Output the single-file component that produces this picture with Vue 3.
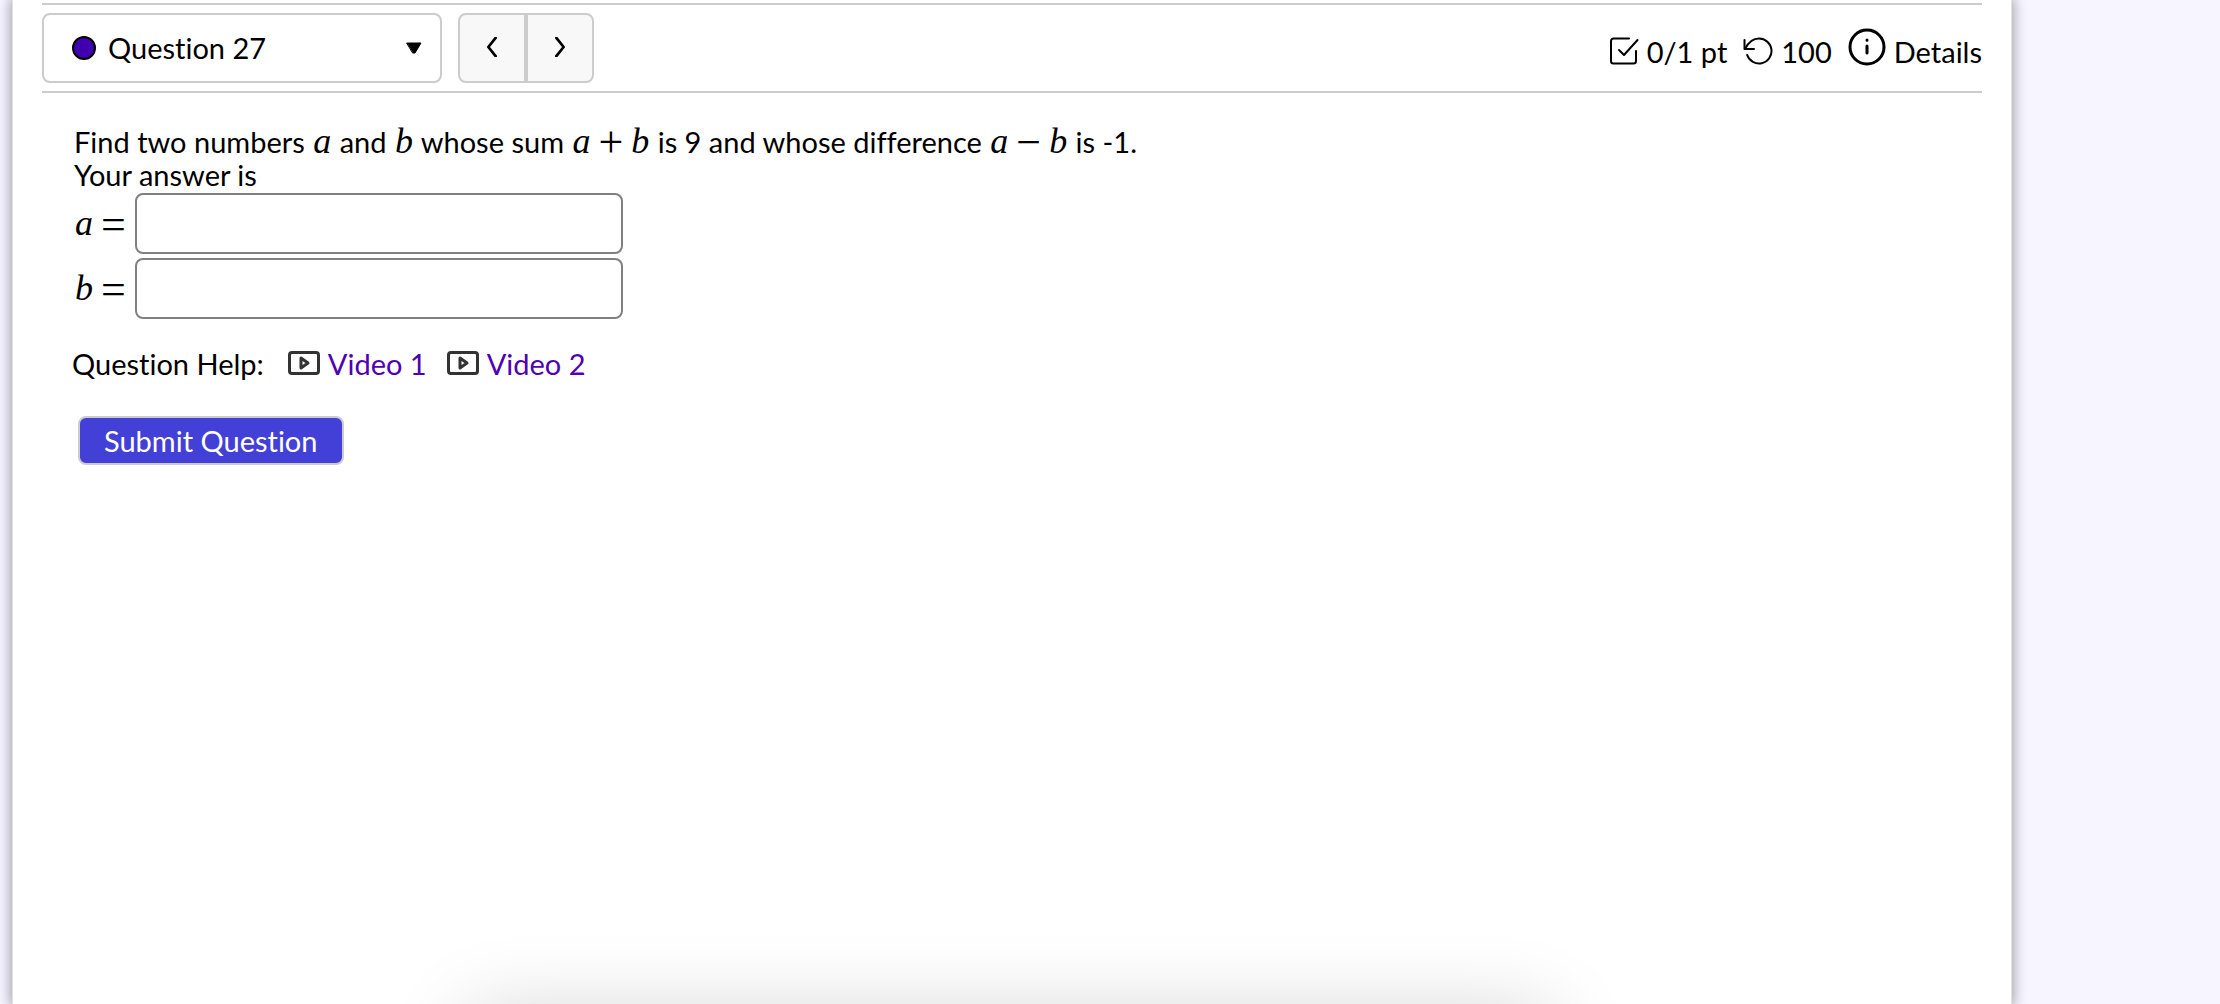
<template>
  <div class="sheet">
    <header class="bar">
      <div class="picker">
        <span class="dot"></span>
        <select v-model="current" class="picker-select" aria-label="Question">
          <option v-for="n in questions" :key="n" :value="n">Question {{ n }}</option>
        </select>
        <svg class="caret" viewBox="0 0 16 12" aria-hidden="true"><path d="M1 1h14L9 11H7z" /></svg>
      </div>
      <div class="pager">
        <button type="button" aria-label="Previous question" @click="go(-1)">
          <svg viewBox="0 0 12 22"><path d="M10 1 2 11l8 10" /></svg>
        </button>
        <button type="button" aria-label="Next question" @click="go(1)">
          <svg viewBox="0 0 12 22"><path d="m2 1 8 10-8 10" /></svg>
        </button>
      </div>

      <div class="status">
        <span class="stat">
          <svg class="icon" viewBox="0 0 30 28" aria-hidden="true">
            <path d="M20 1.500H4.500a2.500 2.500 0 0 0-2.500 2.500v20a2.500 2.500 0 0 0 2.500 2.500h20a2.500 2.500 0 0 0 2.500-2.500V14" />
            <path d="m10 13 5 5L28.500 3" />
          </svg>
          0/1 pt
        </span>
        <span class="stat">
          <svg class="icon" viewBox="0 0 30 28" aria-hidden="true">
            <path d="M1.500 3v9h9.500" />
            <path d="M2 12C5 6 9 1.500 16 1.500a12.500 12.500 0 1 1-11.800 16.500" />
          </svg>
          100
        </span>
        <button type="button" class="stat details">
          <svg class="info" viewBox="0 0 38 38" aria-hidden="true">
            <circle cx="19" cy="19" r="17" />
            <path d="M19 18v7M19 12v.200" />
          </svg>
          Details
        </button>
      </div>
    </header>

    <main class="question">
      <p class="prompt">
        Find two numbers <i>a</i> and <i>b</i> whose sum
        <span class="math"><i>a</i><b>+</b><i>b</i></span> is 9 and whose difference
        <span class="math"><i>a</i><b>−</b><i>b</i></span> is -1.
      </p>
      <p class="prompt">Your answer is</p>
      <div v-for="name in ['a', 'b']" :key="name" class="answer">
        <label :for="'answer-' + name" class="math"><i>{{ name }}</i><b>=</b></label>
        <input :id="'answer-' + name" v-model="answers[name]" type="text" autocomplete="off" />
      </div>
    </main>

    <div class="help">
      <span class="help-title">Question Help:</span>
      <a v-for="n in 2" :key="n" href="#">
        <svg class="video" viewBox="0 0 32 24" aria-hidden="true">
          <rect x="1.500" y="1.500" width="29" height="21" rx="2.500" />
          <path d="M13 7v10l7-5z" />
        </svg>
        Video {{ n }}
      </a>
    </div>

    <button type="button" class="submit">Submit Question</button>
  </div>
  <div class="dock" aria-hidden="true"><div class="dock-shadow"></div></div>
</template>

<script setup>
import { ref, reactive } from 'vue'

const questions = [26, 27, 28]
const current = ref(27)
const answers = reactive({ a: '', b: '' })

const go = (step) => {
  if (questions.includes(current.value + step)) {
    current.value += step
  }
}
</script>

<style>
body {
  margin: 0;
  background: #f7f5ff;
}
</style>

<style scoped>
.sheet {
  box-sizing: border-box;
  min-height: 100vh;
  margin-left: 12px;
  margin-right: 208px;
  padding: 3px 29px 0;
  border: solid #e2e2e2;
  border-width: 0 1px;
  background: #fff;
  box-shadow: 0 0 12px 2px rgba(0, 0, 0, 0.34);
  color: #000;
  font-family: "Trebuchet MS", Lato, sans-serif;
  font-size: 29px;
  font-variant-ligatures: none;
  line-height: 33px;
}

button,
select,
input {
  font: inherit;
  font-variant-ligatures: none;
  color: inherit;
}

svg {
  flex: none;
  fill: none;
  stroke: currentColor;
  stroke-width: 3px;
  stroke-linecap: round;
  stroke-linejoin: round;
}

.bar {
  display: flex;
  align-items: center;
  padding: 8px 0;
  border-top: 2px solid #ccc;
  border-bottom: 2px solid #ccc;
}

/* question drop-down */
.picker {
  display: grid;
  align-items: center;
  width: 400px;
}

.picker > * {
  grid-area: 1 / 1;
}

.dot {
  z-index: 1;
  box-sizing: border-box;
  width: 24px;
  height: 24px;
  margin-left: 30px;
  border: 2px solid #000;
  border-radius: 50%;
  background: #4000b0;
  pointer-events: none;
}

.picker-select {
  width: 100%;
  height: 70px;
  padding: 0 48px 2px 64px;
  border: 2px solid #ccc;
  border-radius: 8px;
  background: #fff;
  appearance: none;
}

.caret {
  justify-self: end;
  width: 16px;
  height: 12px;
  margin-right: 20px;
  fill: currentColor;
  stroke-width: 1px;
  pointer-events: none;
}

.pager {
  display: flex;
  margin-left: 16px;
}

.pager button {
  display: flex;
  align-items: center;
  justify-content: center;
  box-sizing: border-box;
  width: 68px;
  height: 70px;
  padding: 0 0 2px;
  border: 2px solid #ccc;
  border-radius: 8px 0 0 8px;
  background: #f8f8f8;
}

.pager button + button {
  border-radius: 0 8px 8px 0;
}

.pager svg {
  width: 12px;
  height: 20px;
}

.status {
  display: flex;
  gap: 16px;
  margin-left: auto;
}

.stat {
  display: flex;
  align-items: center;
  gap: 8px;
  padding: 6px 0 0;
}

.icon {
  width: 30px;
  height: 28px;
  stroke-width: 2px;
}

.details {
  border: 0;
  background: none;
}

.info {
  width: 38px;
  height: 38px;
  margin-bottom: 8px;
}

/* question text */
.question {
  padding: 32px 32px 0;
}

.prompt {
  margin: 0;
}

.prompt + .prompt {
  margin-bottom: 2px;
}

i,
.math b {
  font-family: "Liberation Serif", serif;
  font-size: 36px;
  font-weight: 400;
  line-height: 1px;
}

.math {
  white-space: nowrap;
}

.math b {
  margin: 0 8px;
  font-size: 44px;
  vertical-align: -4px;
}

.prompt > i,
.math {
  margin: 0 1px;
}

.answer {
  display: flex;
  align-items: center;
  margin-bottom: 4px;
}

.answer input {
  box-sizing: border-box;
  width: 488px;
  height: 61px;
  padding: 4px 12px;
  border: 2px solid #808080;
  border-radius: 8px;
  background: #fff;
}

.help {
  display: flex;
  gap: 20px;
  margin-top: 28px;
  padding-left: 30px;
}

.help-title {
  margin-right: 4px;
}

.help a {
  display: flex;
  align-items: center;
  gap: 8px;
  color: #5000b0;
  text-decoration: none;
}

.video {
  width: 32px;
  height: 24px;
  margin-bottom: 2px;
  color: #333;
}

.submit {
  height: 49px;
  margin: 36px;
  padding: 0 24px;
  border: 2px solid #ccc;
  border-radius: 8px;
  background: #4340d8;
  color: #fff;
}

/* shade cast from below the window's lower edge */
.dock {
  position: fixed;
  left: 0;
  right: 0;
  bottom: 0;
  height: 104px;
  overflow: hidden;
  pointer-events: none;
}

.dock-shadow {
  height: 100px;
  margin: 112px 30% 0 21%;
  border-radius: 24px;
  box-shadow: 0 0 80px 0 rgba(0, 0, 0, 0.17);
}
</style>
